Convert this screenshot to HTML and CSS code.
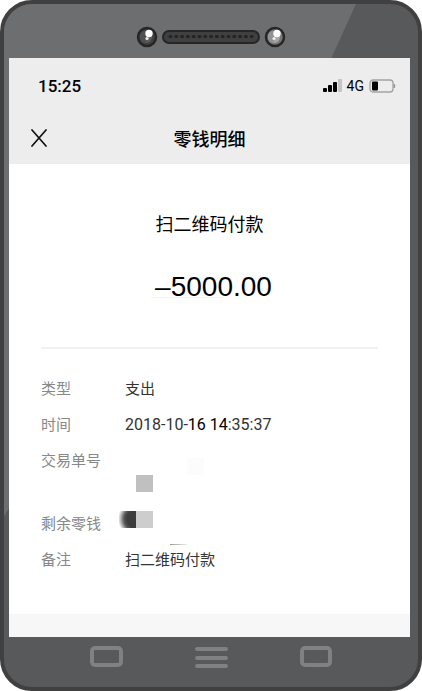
FILE: index.html
```html
<!DOCTYPE html>
<html lang="zh-CN">
<head>
<meta charset="utf-8">
<meta name="viewport" content="width=device-width, initial-scale=1">
<title>零钱明细</title>
<link rel="stylesheet" href="styles.css">
</head>
<body>
<div class="phone">
  <div class="earpiece" aria-hidden="true">
    <svg class="lens" viewBox="0 0 22 22">
      <circle cx="11" cy="11" r="9" fill="#414141" stroke="#262626" stroke-width="2.500"/>
      <circle cx="10" cy="11" r="6" fill="#5c5c5c"/>
      <path d="M10 5a6 6 0 0 0 0 12z" fill="#505050"/>
      <circle cx="13" cy="7.500" r="3.700" fill="#fff"/>
      <circle cx="11" cy="12.500" r="1.600" fill="#eee"/>
    </svg>
    <svg class="speaker" viewBox="0 0 98 14">
      <rect x="1" y="1" width="96" height="12" rx="6" fill="#404040" stroke="#262626" stroke-width="2"/>
      <path d="M8 6.500H92" stroke="#242424" stroke-width="3" stroke-linecap="round" stroke-dasharray="1 4.800"/>
    </svg>
    <svg class="lens" viewBox="0 0 22 22">
      <circle cx="11" cy="11" r="9" fill="#777" stroke="#262626" stroke-width="2.500"/>
      <circle cx="10" cy="11" r="6" fill="#a5a5a5"/>
      <path d="M10 5a6 6 0 0 0 0 12z" fill="#929292"/>
      <circle cx="13" cy="7.500" r="3.700" fill="#fff"/>
      <circle cx="10" cy="12.500" r="1.600" fill="#eee"/>
    </svg>
  </div>

  <main class="screen">
    <header class="top">
      <div class="status">
        <time class="clock">15:25</time>
        <div class="signals">
          <svg class="bars" viewBox="0 0 19 14" aria-hidden="true">
            <rect x="0" y="9" width="4" height="4" rx="1"/>
            <rect x="5" y="6" width="4" height="7" rx="1"/>
            <rect x="10" y="3" width="4" height="10" rx="1"/>
            <rect x="15" y="0" width="4" height="13" rx="1" fill="#c5c5c5"/>
          </svg>
          <span class="network">4G</span>
          <svg class="battery" viewBox="0 0 27 14" aria-hidden="true">
            <rect x="1" y="1" width="23" height="12" rx="3" fill="none" stroke="#a2a2a2" stroke-width="1.300"/>
            <rect x="3" y="2.500" width="6" height="9" rx="1"/>
            <path d="M25 5q2 2 0 4z" fill="#999" stroke="#999"/>
          </svg>
        </div>
      </div>
      <div class="titlebar">
        <button class="close" type="button" aria-label="关闭">
          <svg viewBox="0 0 16 18" aria-hidden="true"><path d="M1 1 15 17M15 1 1 17" stroke="#111" stroke-width="1.700" stroke-linecap="round"/></svg>
        </button>
        <h1 class="title">零钱明细</h1>
      </div>
    </header>

    <section class="summary">
      <h2 class="subject">扫二维码付款</h2>
      <p class="amount">–5000.00</p>
    </section>

    <dl class="details">
      <dt>类型</dt><dd>支出</dd>
      <dt>时间</dt><dd class="date">2018-10-<span class="strong">16 14</span>:35:37</dd>
      <dt>交易单号</dt><dd class="masked-number"><span class="block faint"></span><span class="block mid"></span></dd>
      <dt>剩余零钱</dt><dd class="masked-balance"><span class="block dark"></span><span class="block light"></span></dd>
      <dt>备注</dt><dd>扫二维码付款</dd>
    </dl>
    <div class="foot"></div>
  </main>

  <nav class="keys">
    <button class="key" type="button" aria-label="最近"><svg viewBox="0 0 33 22" aria-hidden="true"><rect x="2" y="2" width="29" height="17" rx="3"/></svg></button>
    <button class="key" type="button" aria-label="菜单"><svg viewBox="0 0 33 22" aria-hidden="true"><path d="M2 3H31M2 12H31M2 20H31" stroke-linecap="round"/></svg></button>
    <button class="key" type="button" aria-label="返回"><svg viewBox="0 0 33 22" aria-hidden="true"><rect x="2" y="2" width="28" height="17" rx="3"/></svg></button>
  </nav>
</div>
</body>
</html>
```

FILE: styles.css
```css
* {
  box-sizing: border-box;
}

body {
  margin: 0;
  background: #fff;
  color: #000;
  font-family: Roboto, "Noto Sans CJK SC", sans-serif;
}

h1, h2, p, dl, dd {
  margin: 0;
}

button {
  padding: 0;
  border: 0;
  background: none;
}

svg {
  display: block;
}

.phone {
  position: relative;
  display: flex;
  flex-direction: column;
  min-height: 100vh;
  border: 4px solid #404040;
  border-radius: 32px;
  background: #58595b;
  overflow: hidden;
}

/* diagonal shine across the bezel */
.phone::before {
  content: "";
  position: absolute;
  inset: 0;
  background: #6d6e70;
  clip-path: polygon(0 0, 85% 0, 79% 8%, 1% 74%, 0 75%);
}

.earpiece {
  position: relative;
  display: flex;
  justify-content: center;
  align-items: center;
  gap: 4px;
  height: 54px;
  padding-top: 12px;
}

.lens {
  width: 22px;
  height: 22px;
}

.speaker {
  width: 98px;
  height: 14px;
}

.screen {
  position: relative;
  flex: 1;
  display: flex;
  flex-direction: column;
  margin: 0 8px 0 5px;
  background: #fff;
}

.top {
  height: 106px;
  background: #ededed;
}

.status {
  display: flex;
  justify-content: space-between;
  align-items: center;
  height: 56px;
  padding: 0 14px 0 29px;
}

.clock {
  font-size: 17px;
  font-weight: 500;
}

.signals {
  display: flex;
  align-items: center;
  gap: 5px;
}

.bars {
  width: 19px;
  height: 14px;
}

.network {
  font-size: 14px;
}

.battery {
  width: 27px;
  height: 14px;
}

.titlebar {
  display: grid;
  grid-template-columns: 60px 1fr 60px;
  align-items: center;
  height: 48px;
}

.close {
  justify-self: center;
}

.close svg {
  width: 16px;
  height: 18px;
}

.title {
  font-size: 18px;
  font-weight: 500;
  text-align: center;
}

.summary {
  margin: 0 32px;
  padding-top: 49px;
  height: 185px;
  border-bottom: 2px solid #f1f1f1;
  text-align: center;
}

.subject {
  font-size: 18px;
  font-weight: 400;
  line-height: 24px;
}

.amount {
  margin-top: 34px;
  padding-left: 8px;
  background: linear-gradient(#f3f3f3, #f3f3f3) 110px 26px / 72px 1px no-repeat;
  font-family: "Liberation Sans", sans-serif;
  font-size: 28px;
  line-height: 32px;
}

.details {
  display: grid;
  grid-template-columns: 84px 1fr;
  grid-template-rows: 36px 36px 63px 36px 36px;
  margin: 27px 32px 31px;
  font-size: 15px;
  line-height: 26px;
}

.details dt {
  color: #888;
}

.details dd {
  color: #333;
}

.details .date {
  font-size: 16px;
}

.strong {
  color: #000;
}

.block {
  display: block;
  width: 17px;
  height: 17px;
}

.masked-number {
  display: grid;
  align-content: start;
  padding: 10px 0 0 11px;
}

.faint {
  margin-left: 51px;
  background: #fcfcfc;
}

.mid {
  background: #c0c0c0;
}

.masked-balance {
  display: flex;
  margin-left: -6px;
  background: linear-gradient(90deg, #999, #eee) 51px 33px / 17px 1px no-repeat;
}

.dark {
  background: radial-gradient(circle at 17px 8px, #3c3c3c 9px, #555 12px, #fff 18px);
}

.light {
  background: #cdcdcd;
}

.foot {
  flex: 1;
  min-height: 23px;
  background: #f7f7f7;
}

.keys {
  position: relative;
  display: flex;
  justify-content: center;
  align-items: center;
  gap: 72px;
  height: 50px;
  padding-bottom: 10px;
}

.key svg {
  width: 33px;
  height: 22px;
  fill: none;
  stroke: #808183;
  stroke-width: 4;
}
```
